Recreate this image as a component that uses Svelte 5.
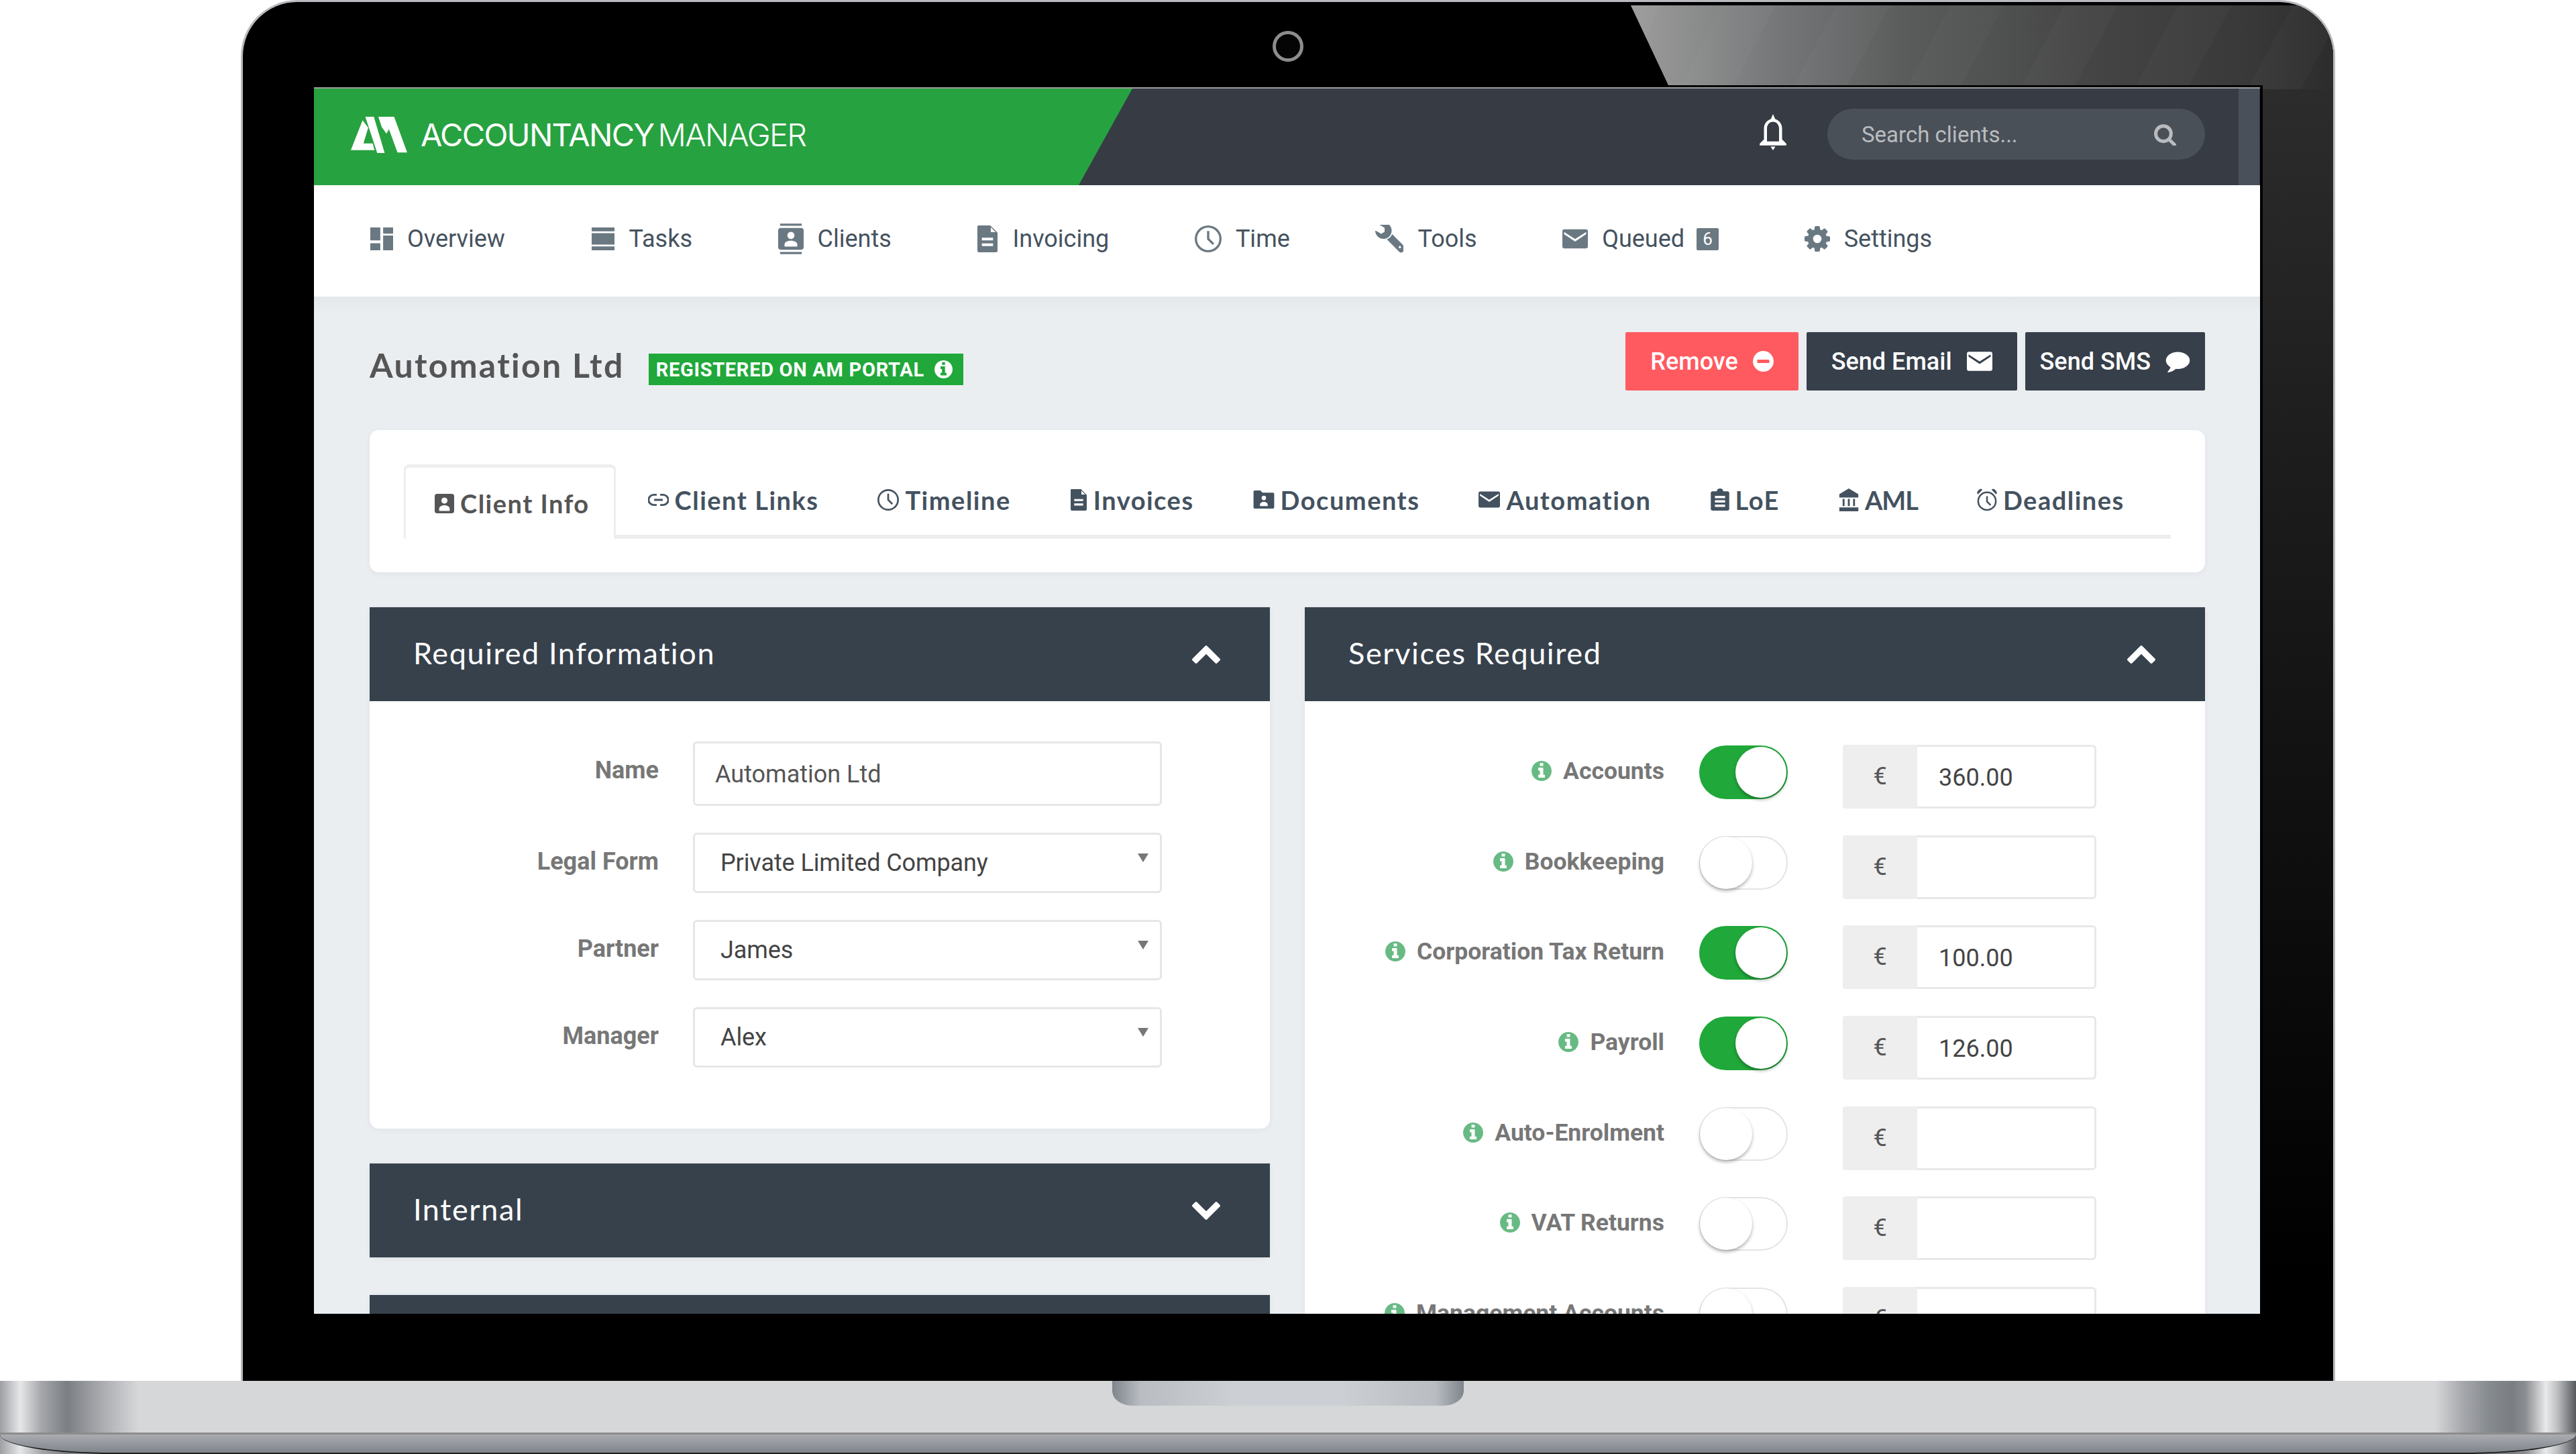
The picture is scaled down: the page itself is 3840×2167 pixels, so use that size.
<script>
  const tight = '128 128 1536 1536';
  const mail = 'M2 3h20a2 2 0 0 1 2 2v14a2 2 0 0 1-2 2H2a2 2 0 0 1-2-2V5a2 2 0 0 1 2-2zM1.6 5.6v2L12 14.6l10.4-7v-2L12 12.2z';
  const file = 'M4 0h10.5L21 6.5V22.5a1.5 1.5 0 0 1-1.5 1.5h-15A1.5 1.5 0 0 1 3 22.5V1a1 1 0 0 1 1-1zM15 1.7V6h4.3zM7 11h10v2.4H7zM7 16h10v2.4H7z';
  const clock = 'M12 0a12 12 0 1 0 0 24 12 12 0 0 0 0-24zM12 2a10 10 0 1 1 0 20 10 10 0 0 1 0-20zM11 5h2v6.6l4.4 4.4-1.4 1.4-5-5z';

  const icons = {
    overview: ['0 0 24 24', 'M0 0h10.5v13.5H0zM13.5 0H24v6.5H13.5zM13.5 8.5H24V24H13.5zM0 16.5h10.5V24H0z'],
    tasks: ['0 0 24 24', 'M0 0h24v4H0zM0 6h24v12H0zM0 20h24v4H0z'],
    clients: ['2 0 20 24', 'M3.5 0h17v1.7h-17zM3.5 22.3h17V24h-17zM4 3.5h16a2 2 0 0 1 2 2v13a2 2 0 0 1-2 2H4a2 2 0 0 1-2-2v-13a2 2 0 0 1 2-2zM12 6.5a2.8 2.8 0 1 0 0 5.6 2.8 2.8 0 0 0 0-5.6zM7 18v-1.5c0-1.8 2-3 5-3s5 1.2 5 3V18z'],
    file: ['3 0 18 24', file],
    clock: ['0 0 24 24', clock],
    wrench: [tight, 'M384 1344q0-26-19-45t-45-19-45 19-19 45 19 45 45 19 45-19 19-45zm644-420l-682 682q-37 37-90 37-52 0-91-37l-106-108q-38-36-38-90 0-53 38-91l681-681q39 98 114.5 173.5t173.5 114.5zm634-435q0 39-23 106-47 134-164.5 217.5t-258.5 83.5q-185 0-316.5-131.5t-131.5-316.5 131.5-316.5 316.5-131.5q58 0 121.5 16.5t107.5 46.5q16 11 16 28t-16 28l-293 169v224l193 107q5-3 79-48.5t135.5-81 70.5-35.5q15 0 23.5 10t8.5 25z', 'translate(1792 0) scale(-1 1)'],
    mail: ['0 3 24 18', mail],
    gear: [tight, 'M1152 896q0-106-75-181t-181-75-181 75-75 181 75 181 181 75 181-75 75-181zm512-109v222q0 12-8 23t-20 13l-185 28q-19 54-39 91 35 50 107 138 10 12 10 25t-9 23q-27 37-99 108t-94 71q-12 0-26-9l-138-108q-44 23-91 38-16 136-29 186-7 28-36 28h-222q-14 0-24.5-8.5t-11.5-21.5l-28-184q-49-16-90-37l-141 107q-10 9-25 9-14 0-25-11-126-114-165-168-7-10-7-23 0-12 8-23 15-21 51-66.5t54-70.5q-27-50-41-99l-183-27q-13-2-21-12.5t-8-23.5v-222q0-12 8-23t19-13l186-28q14-46 39-92-40-57-107-138-10-12-10-24 0-10 9-23 26-36 98.5-107.5t94.5-71.5q13 0 26 10l138 107q44-23 91-38 16-136 29-186 7-28 36-28h222q14 0 24.5 8.5t11.5 21.5l28 184q49 16 90 37l142-107q9-9 24-9 13 0 25 10 129 119 165 170 7 8 7 22 0 12-8 23-15 21-51 66.5t-54 70.5q26 50 41 98l183 28q13 2 21 12.5t8 23.5z'],
    search: ['64 64 1664 1664', 'M1216 832q0-185-131.5-316.5t-316.5-131.5-316.5 131.5-131.5 316.5 131.5 316.5 316.5 131.5 316.5-131.5 131.5-316.5zm512 832q0 52-38 90t-90 38q-54 0-90-38l-343-342q-179 124-399 124-143 0-273.5-55.5t-225-150-150-225-55.5-273.5 55.5-273.5 150-225 225-150 273.5-55.5 273.5 55.5 225 150 150 225 55.5 273.5q0 220-124 399l343 343q37 37 37 90z'],
    minus: [tight, 'M1344 960v-128q0-26-19-45t-45-19h-768q-26 0-45 19t-19 45v128q0 26 19 45t45 19h768q26 0 45-19t19-45zm320-64q0 209-103 385.5t-279.5 279.5-385.5 103-385.5-103-279.5-279.5-103-385.5 103-385.5 279.5-279.5 385.5-103 385.5 103 279.5 279.5 103 385.5z'],
    comment: ['0 128 1792 1664', 'M1792 896q0 174-120 321.5t-326 233-450 85.5q-70 0-145-8-198 175-460 242-49 14-114 22-17 2-30.5-9t-17.5-29v-1q-3-4-.5-12t2-10 4.5-9.5l6-9 7-8.5 8-9q7-8 31-34.5t34.5-38 31-39.5 32.5-51 27-59 26-76q-157-89-247.5-220t-90.5-281q0-130 71-248.5t191-204.5 286-136.5 348-50.5q244 0 450 85.5t326 233 120 321.5z'],
    info: [tight, 'M1152 1376v-160q0-14-9-23t-23-9h-96v-512q0-14-9-23t-23-9h-320q-14 0-23 9t-9 23v160q0 14 9 23t23 9h96v320h-96q-14 0-23 9t-9 23v160q0 14 9 23t23 9h448q14 0 23-9t9-23zm-128-896v-160q0-14-9-23t-23-9h-192q-14 0-23 9t-9 23v160q0 14 9 23t23 9h192q14 0 23-9t9-23zm640 416q0 209-103 385.5t-279.5 279.5-385.5 103-385.5-103-279.5-279.5-103-385.5 103-385.5 279.5-279.5 385.5-103 385.5 103 279.5 279.5 103 385.5z'],
    up: ['90 480 1612 1035', 'M1683 1331l-166 165q-19 19-45 19t-45-19l-531-531-531 531q-19 19-45 19t-45-19l-166-165q-19-19-19-45.5t19-45.5l742-741q19-19 45-19t45 19l742 741q19 19 19 45.5t-19 45.5z'],
    down: ['90 533 1612 1035', 'M1683 808l-742 741q-19 19-45 19t-45-19l-742-741q-19-19-19-45.5t19-45.5l166-165q19-19 45-19t45 19l531 531 531-531q19-19 45-19t45 19l166 165q19 19 19 45.5t-19 45.5z'],
    bell: ['1 0 22 30', 'M12 0l1.8 4.2C17 5.2 19.5 8 19.5 12v9l3.5 3.5V26H1v-1.5L4.5 21v-9c0-4 2.5-6.8 5.7-7.8zM7 22.6h10V12c0-3-2-5.6-5-5.6S7 9 7 12zM10 27h4l-2 3z'],
    card: ['0 0 24 24', 'M3 0h18a3 3 0 0 1 3 3v18a3 3 0 0 1-3 3H3a3 3 0 0 1-3-3V3a3 3 0 0 1 3-3zM12 4.5a3.8 3.8 0 1 0 0 7.6 3.8 3.8 0 0 0 0-7.6zM5.5 21v-2.5c0-2.5 2.8-4.4 6.5-4.4s6.5 1.9 6.5 4.4V21z'],
    link: ['0 5 24 14', 'M10 5H6.5a7 7 0 0 0 0 14H10v-2.2H6.5a4.8 4.8 0 0 1 0-9.6H10zM14 5h3.5a7 7 0 0 1 0 14H14v-2.2h3.5a4.8 4.8 0 0 0 0-9.6H14zM7 10.8h10v2.4H7z'],
    folder: ['0 1 24 21', 'M1.5 1h6.5l2.5 2.5h12A1.5 1.5 0 0 1 24 5v15.5a1.5 1.5 0 0 1-1.5 1.5h-21A1.5 1.5 0 0 1 0 20.5v-18A1.5 1.5 0 0 1 1.5 1zM12 7a2.6 2.6 0 1 0 0 5.2A2.6 2.6 0 0 0 12 7zM7.5 19v-1.6c0-1.9 2-3.2 4.5-3.2s4.5 1.3 4.5 3.2V19z'],
    clip: ['2 0 20 24', 'M4 3h4.6V2.6a3.4 2.6 0 0 1 6.8 0V3H20a2 2 0 0 1 2 2v17a2 2 0 0 1-2 2H4a2 2 0 0 1-2-2V5a2 2 0 0 1 2-2zM6.5 8h11v2.6h-11zM6.5 12.7h11v2.6h-11zM6.5 17.4h11V20h-11z'],
    bank: ['2 0 20 24', 'M12 0l10 6v3.5H2V6zM5.5 11h2v7.5h-2zM11 11h2v7.5h-2zM16.5 11h2v7.5h-2zM2 20h20v4H2z'],
    alarm: ['0 0 24 27', 'M12 3.5a11.5 11.5 0 1 0 0 23 11.5 11.5 0 0 0 0-23zM12 5.5a9.5 9.5 0 1 1 0 19 9.5 9.5 0 0 1 0-19zM11 9h2v6l4 4-1.4 1.4-4.6-4.6zM1 7L6.5 1.5 5 .3C3.5 0 .3 3 .2 5zM23 7L17.5 1.5 19 .3c1.5-.3 4.7 2.7 4.8 4.7z']
  };

  const navItems = [
    { label: 'Overview', icon: 'overview', w: 34, h: 34 },
    { label: 'Tasks', icon: 'tasks', w: 36, h: 34 },
    { label: 'Clients', icon: 'clients', w: 38, h: 46 },
    { label: 'Invoicing', icon: 'file', w: 32, h: 40 },
    { label: 'Time', icon: 'clock', w: 40, h: 40 },
    { label: 'Tools', icon: 'wrench', w: 42, h: 42 },
    { label: 'Queued', icon: 'mail', w: 38, h: 30, badge: 6 },
    { label: 'Settings', icon: 'gear', w: 38, h: 38 }
  ];

  const tabs = [
    { label: 'Client Info', icon: 'card', w: 29, h: 29, active: true },
    { label: 'Client Links', icon: 'link', w: 31, h: 18 },
    { label: 'Timeline', icon: 'clock', w: 32, h: 32 },
    { label: 'Invoices', icon: 'file', w: 26, h: 32 },
    { label: 'Documents', icon: 'folder', w: 32, h: 27 },
    { label: 'Automation', icon: 'mail', w: 32, h: 25 },
    { label: 'LoE', icon: 'clip', w: 28, h: 33 },
    { label: 'AML', icon: 'bank', w: 30, h: 34, narrow: true },
    { label: 'Deadlines', icon: 'alarm', w: 30, h: 34 }
  ];

  const fields = [
    { label: 'Name', value: 'Automation Ltd' },
    { label: 'Legal Form', value: 'Private Limited Company', select: true },
    { label: 'Partner', value: 'James', select: true },
    { label: 'Manager', value: 'Alex', select: true }
  ];

  const services = [
    { label: 'Accounts', on: true, value: '360.00' },
    { label: 'Bookkeeping', on: false, value: '' },
    { label: 'Corporation Tax Return', on: true, value: '100.00' },
    { label: 'Payroll', on: true, value: '126.00' },
    { label: 'Auto-Enrolment', on: false, value: '' },
    { label: 'VAT Returns', on: false, value: '' },
    { label: 'Management Accounts', on: false, value: '' }
  ];
</script>

{#snippet icon(name, w, h)}
  <svg class="ic" viewBox={icons[name][0]} style="width:{w}px;height:{h}px" aria-hidden="true">
    <path d={icons[name][1]} transform={icons[name][2]} fill-rule="evenodd" />
  </svg>
{/snippet}

<div class="page">
  <div class="bezel">
    <div class="glare"></div>
    <div class="camera"></div>
    <div class="screen">
      <header class="top">
        <div class="brand">
          <svg class="logo" viewBox="28 30 250 160" aria-hidden="true">
            <polygon points="28,178 80,45 105,78 84,148 125,148 133,178" />
            <polygon points="92,30 130,30 178,190 145,190" />
            <polygon points="150,30 220,30 278,188 235,188 197,85 186,105 165,75" />
          </svg>
          <span class="wordmark"><b>ACCOUNTANCY</b><i>MANAGER</i></span>
        </div>
        <div class="bell">{@render icon('bell', 42, 54)}</div>
        <div class="search">
          <span>Search clients...</span>
          {@render icon('search', 33, 33)}
        </div>
        <div class="scroll"></div>
      </header>

      <nav class="nav">
        {#each navItems as item}
          <div class="nav-item">
            {@render icon(item.icon, item.w, item.h)}
            <span>{item.label}</span>
            {#if item.badge}<em>{item.badge}</em>{/if}
          </div>
        {/each}
      </nav>

      <main class="main">
        <div class="title-row">
          <div class="title-block">
            <h1>Automation Ltd</h1>
            <span class="badge">REGISTERED ON AM PORTAL {@render icon('info', 27, 27)}</span>
          </div>
          <div class="actions">
            <button class="btn remove">Remove {@render icon('minus', 31, 31)}</button>
            <button class="btn email">Send Email {@render icon('mail', 38, 29)}</button>
            <button class="btn sms">Send SMS {@render icon('comment', 37, 33)}</button>
          </div>
        </div>

        <section class="tabs-card">
          <div class="tabs">
            {#each tabs as tab}
              <div class="tab" class:active={tab.active} class:narrow={tab.narrow}>
                {@render icon(tab.icon, tab.w, tab.h)}
                <span>{tab.label}</span>
              </div>
            {/each}
          </div>
        </section>

        <div class="columns">
          <div class="col">
            <section class="panel">
              <div class="panel-head">
                <h2>Required Information</h2>
                {@render icon('up', 42, 27)}
              </div>
              <div class="form">
                {#each fields as f}
                  <div class="form-row">
                    <span class="form-label">{f.label}</span>
                    <div class="field" class:select={f.select}>{f.value}</div>
                  </div>
                {/each}
              </div>
            </section>
            <section class="panel closed">
              <div class="panel-head">
                <h2>Internal</h2>
                {@render icon('down', 42, 27)}
              </div>
            </section>
            <section class="panel closed last">
              <div class="panel-head"></div>
            </section>
          </div>

          <div class="col">
            <section class="panel grow">
              <div class="panel-head">
                <h2>Services Required</h2>
                {@render icon('up', 42, 27)}
              </div>
              <div class="services">
                {#each services as s}
                  <div class="service">
                    <div class="service-label">
                      {@render icon('info', 30, 30)}
                      <span>{s.label}</span>
                    </div>
                    <div class="toggle" class:on={s.on}><div class="knob"></div></div>
                    <div class="money">
                      <span class="addon">€</span>
                      <span class="amount">{s.value}</span>
                    </div>
                  </div>
                {/each}
              </div>
            </section>
          </div>
        </div>
      </main>
    </div>
  </div>

  <div class="base">
    <div class="notch"></div>
    <div class="lip"></div>
  </div>
</div>

<style>
  :global(body) {
    background: #fff;
  }

  .page {
    width: 3840px;
    height: 2167px;
    overflow: hidden;
    font-family: Roboto, sans-serif;
  }

  .ic {
    fill: currentColor;
    flex: none;
    display: block;
  }

  /* laptop */
  .bezel {
    position: relative;
    box-sizing: border-box;
    width: 3122px;
    height: 2058px;
    margin-left: 359px;
    padding: 127px 0 0 106px;
    background: #000;
    border: 3px solid #b9babe;
    border-bottom: 0;
    border-radius: 84px 84px 0 0;
    overflow: hidden;
  }

  .glare {
    position: absolute;
    inset: 0;
    clip-path: polygon(2069px 5px, 2125px 124px, 3011px 124px, 3011px 2055px, 3116px 2055px, 3116px 5px);
    background:
      repeating-linear-gradient(118deg, rgba(255, 255, 255, 0.02) 0 70px, rgba(255, 255, 255, 0) 70px 150px) top / 100% 130px no-repeat,
      linear-gradient(to right, #9c9c9c 2069px, #737576 2300px, #5a5c5c 2480px, #454545 2750px, #383838 3000px, #2c2c2c 3116px) top / 100% 130px no-repeat,
      linear-gradient(to bottom, #2c2c2c 130px, #1c1c1c 700px, #0e0e0e 1300px, #000 1900px);
  }

  .camera {
    position: absolute;
    left: 1535px;
    top: 43px;
    width: 46px;
    height: 46px;
    box-sizing: border-box;
    border: 5px solid #8d8d8d;
    border-radius: 50%;
    background: #050505;
  }

  .screen {
    position: relative;
    width: 2901px;
    height: 1828px;
    overflow: hidden;
    background: #fff;
  }

  .base {
    position: relative;
    height: 109px;
    background: linear-gradient(to right, #9e9fa3 0, #e6e7e8 30px, #a4a6aa 62px, #7b7e83 100px, #a8aaae 150px, #d6d7d9 206px, #d6d7d9 3630px, #a8a9ad 3670px, #868b90 3710px, #7a7d82 3745px, #8c8e92 3765px, #e8e9ea 3795px, #bfc0c2 3812px, #55585c 3840px);
  }

  .notch {
    position: absolute;
    left: 1658px;
    top: 0;
    width: 524px;
    height: 37px;
    border-radius: 0 0 30px 30px / 0 0 22px 22px;
    background: linear-gradient(to right, #7f858c, #b9bdc2 8%, #ccd0d4 35%, #ccd0d4 65%, #b9bdc2 92%, #7f858c);
  }

  .lip {
    position: absolute;
    left: 0;
    right: 0;
    top: 77px;
    height: 32px;
    box-sizing: border-box;
    border-top: 3px solid #8c8c8c;
    border-bottom: 2px solid #1d1d1d;
    border-radius: 0 0 170px 170px / 0 0 29px 29px;
    background: linear-gradient(to bottom, #aaacb1, #7f848b);
  }

  /* top bar */
  .top {
    display: flex;
    align-items: center;
    height: 146px;
    box-sizing: border-box;
    border-top: 2px solid #9b9c9e;
    background: #363b44;
  }

  .brand {
    display: flex;
    align-items: center;
    gap: 20px;
    align-self: stretch;
    width: 1220px;
    margin-right: auto;
    padding: 0 0 7px 55px;
    box-sizing: border-box;
    background: #27a240;
    clip-path: polygon(0 0, 100% 0, 1140px 100%, 0 100%);
    color: #fff;
  }

  .logo {
    width: 84px;
    height: 54px;
    fill: #fff;
  }

  .wordmark {
    font-family: Inter, sans-serif;
    font-size: 47px;
    letter-spacing: -1.7px;
    white-space: nowrap;
  }

  .wordmark b {
    font-weight: 400;
  }

  .wordmark i {
    font-style: normal;
    font-weight: 300;
    margin-left: 6px;
  }

  .bell {
    color: #fff;
    margin: 0 60px 14px 0;
  }

  .search {
    display: flex;
    align-items: center;
    justify-content: space-between;
    width: 563px;
    height: 76px;
    box-sizing: border-box;
    padding: 0 43px 0 51px;
    margin-bottom: 8px;
    border-radius: 38px;
    background: #4a5058;
    color: #b9bcbf;
    font-size: 33px;
  }

  .scroll {
    align-self: stretch;
    width: 31px;
    margin: 0 1px 0 50px;
    background: #4a5059;
  }

  /* main nav */
  .nav {
    display: flex;
    align-items: center;
    gap: 127.6px;
    height: 166px;
    padding-left: 84px;
    padding-bottom: 6px;
    box-sizing: border-box;
    background: #fff;
  }

  .nav-item {
    display: flex;
    align-items: center;
    gap: 21px;
    color: #45535f;
    font-size: 36px;
  }

  .nav-item .ic {
    color: #6a7882;
  }

  .nav-item em {
    font-style: normal;
    font-size: 26px;
    width: 33px;
    height: 33px;
    line-height: 33px;
    text-align: center;
    background: #6a7882;
    color: #fff;
    margin-left: -3px;
    border-radius: 2px;
  }

  /* page body */
  .main {
    height: 1516px;
    box-sizing: border-box;
    padding: 53px 82px 0 83px;
    background: linear-gradient(to bottom, #e5e8eb 0, #eaeef1 24px);
  }

  .title-row {
    display: flex;
    justify-content: space-between;
    align-items: flex-start;
    height: 87px;
  }

  .title-block {
    display: flex;
    align-items: flex-start;
    gap: 36px;
    margin-top: 32px;
  }

  h1 {
    margin: -6px 0 0;
    font-family: Lato, sans-serif;
    font-size: 50px;
    font-weight: 700;
    letter-spacing: 2.3px;
    line-height: 47px;
    color: #555;
  }

  .badge {
    display: flex;
    align-items: center;
    gap: 15px;
    height: 47px;
    padding: 0 16px 0 11px;
    background: #20a83a;
    color: #fff;
    font-size: 29px;
    letter-spacing: 0.7px;
    font-weight: 700;
  }

  .actions {
    display: flex;
    gap: 12px;
  }

  .btn {
    display: flex;
    align-items: center;
    gap: 22px;
    height: 87px;
    border: 0;
    border-radius: 2px;
    background: #363f4a;
    color: #fff;
    font: 500 36px Roboto, sans-serif;
    white-space: nowrap;
  }

  .remove {
    background: #ff5a5f;
    padding: 0 37px;
  }

  .email {
    padding: 0 37px;
  }

  .sms {
    padding: 0 22px;
  }

  /* tabs */
  .tabs-card {
    margin-top: 59px;
    padding: 51px 51px 50px 51px;
    background: #fff;
    border-radius: 14px;
    box-shadow: 0 2px 8px rgba(60, 70, 80, 0.06);
  }

  .tabs {
    display: flex;
    height: 111px;
    box-sizing: border-box;
    border-bottom: 6px solid #eee;
  }

  .tab {
    display: flex;
    align-items: center;
    gap: 9px;
    padding: 0 44px;
    color: #44525f;
    font-family: Lato, sans-serif;
    font-size: 38px;
    font-weight: 700;
    letter-spacing: 1.5px;
    white-space: nowrap;
  }

  .tab.narrow {
    letter-spacing: -1px;
  }

  .tab.active {
    height: 111px;
    box-sizing: border-box;
    padding: 0 36px 0 43px;
    margin-right: 4px;
    background: #fff;
    border: solid #eee;
    border-width: 5px 3px 0;
    border-radius: 8px 8px 0 0;
    color: #555;
  }

  /* panels */
  .columns {
    display: flex;
    gap: 52px;
    margin-top: 52px;
    height: 1100px;
  }

  .col {
    display: flex;
    flex-direction: column;
    flex: 1;
    min-width: 0;
    gap: 52px;
  }

  .panel {
    background: #fff;
    border-radius: 0 0 14px 14px;
    box-shadow: 0 2px 8px rgba(60, 70, 80, 0.06);
  }

  .panel.grow {
    flex: 1;
  }

  .panel.last {
    margin-top: 4px;
  }

  .panel-head {
    display: flex;
    align-items: center;
    justify-content: space-between;
    height: 140px;
    flex: none;
    box-sizing: border-box;
    padding: 0 74px 0 65px;
    background: #37414c;
    color: #fff;
  }

  h2 {
    margin: 0 0 4px;
    font-family: Lato, sans-serif;
    font-size: 45px;
    font-weight: 400;
    letter-spacing: 1.6px;
  }

  .form {
    padding: 60px 0 91px;
  }

  .form-row {
    display: flex;
    align-items: flex-start;
    gap: 51px;
    margin-bottom: 40px;
  }

  .form-row:last-child {
    margin-bottom: 0;
  }

  .form-label {
    width: 431px;
    text-align: right;
    font-size: 36px;
    font-weight: 700;
    color: #777;
    line-height: 86px;
  }

  .field {
    position: relative;
    box-sizing: border-box;
    width: 699px;
    height: 96px;
    padding-left: 30px;
    border: 3px solid #e6e6e6;
    border-radius: 6px;
    font-size: 36px;
    line-height: 92px;
    color: #555;
  }

  .field.select {
    height: 90px;
    padding-left: 38px;
    line-height: 85px;
    letter-spacing: -0.1px;
    color: #444;
  }

  .field.select::after {
    content: '';
    position: absolute;
    right: 17px;
    top: 28px;
    border: 8px solid transparent;
    border-top: 13px solid #777;
    border-bottom: 0;
  }

  .services {
    padding-top: 65px;
  }

  .service {
    display: flex;
    align-items: flex-start;
    height: 134.7px;
  }

  .service-label {
    display: flex;
    align-items: center;
    justify-content: flex-end;
    gap: 17px;
    width: 536px;
    height: 78px;
    font-size: 35.5px;
    font-weight: 700;
    color: #777;
    white-space: nowrap;
  }

  .service-label .ic {
    color: #68ba84;
  }

  .toggle {
    position: relative;
    box-sizing: border-box;
    width: 132px;
    height: 80px;
    margin: 1px 82px 0 52px;
    border: 2px solid #e4e4e4;
    border-radius: 40px;
    background: #fff;
  }

  .toggle.on {
    border-color: #20a83a;
    background: #20a83a;
  }

  .knob {
    position: absolute;
    left: -1px;
    top: -1px;
    width: 78px;
    height: 78px;
    border-radius: 50%;
    background: #fff;
    box-shadow: 0 3px 5px rgba(0, 0, 0, 0.3);
  }

  .toggle.on .knob {
    left: auto;
    right: 0;
    top: 0;
    width: 76px;
    height: 76px;
  }

  .money {
    display: flex;
    width: 378px;
    height: 95px;
  }

  .addon {
    width: 111px;
    line-height: 95px;
    text-align: center;
    background: #eee;
    color: #555;
    font-size: 36px;
    border-radius: 4px 0 0 4px;
  }

  .amount {
    flex: 1;
    box-sizing: border-box;
    padding-left: 32px;
    border: 3px solid #e8e8e8;
    border-left: 0;
    border-radius: 0 6px 6px 0;
    line-height: 92px;
    font-size: 36px;
    color: #444;
  }
</style>
